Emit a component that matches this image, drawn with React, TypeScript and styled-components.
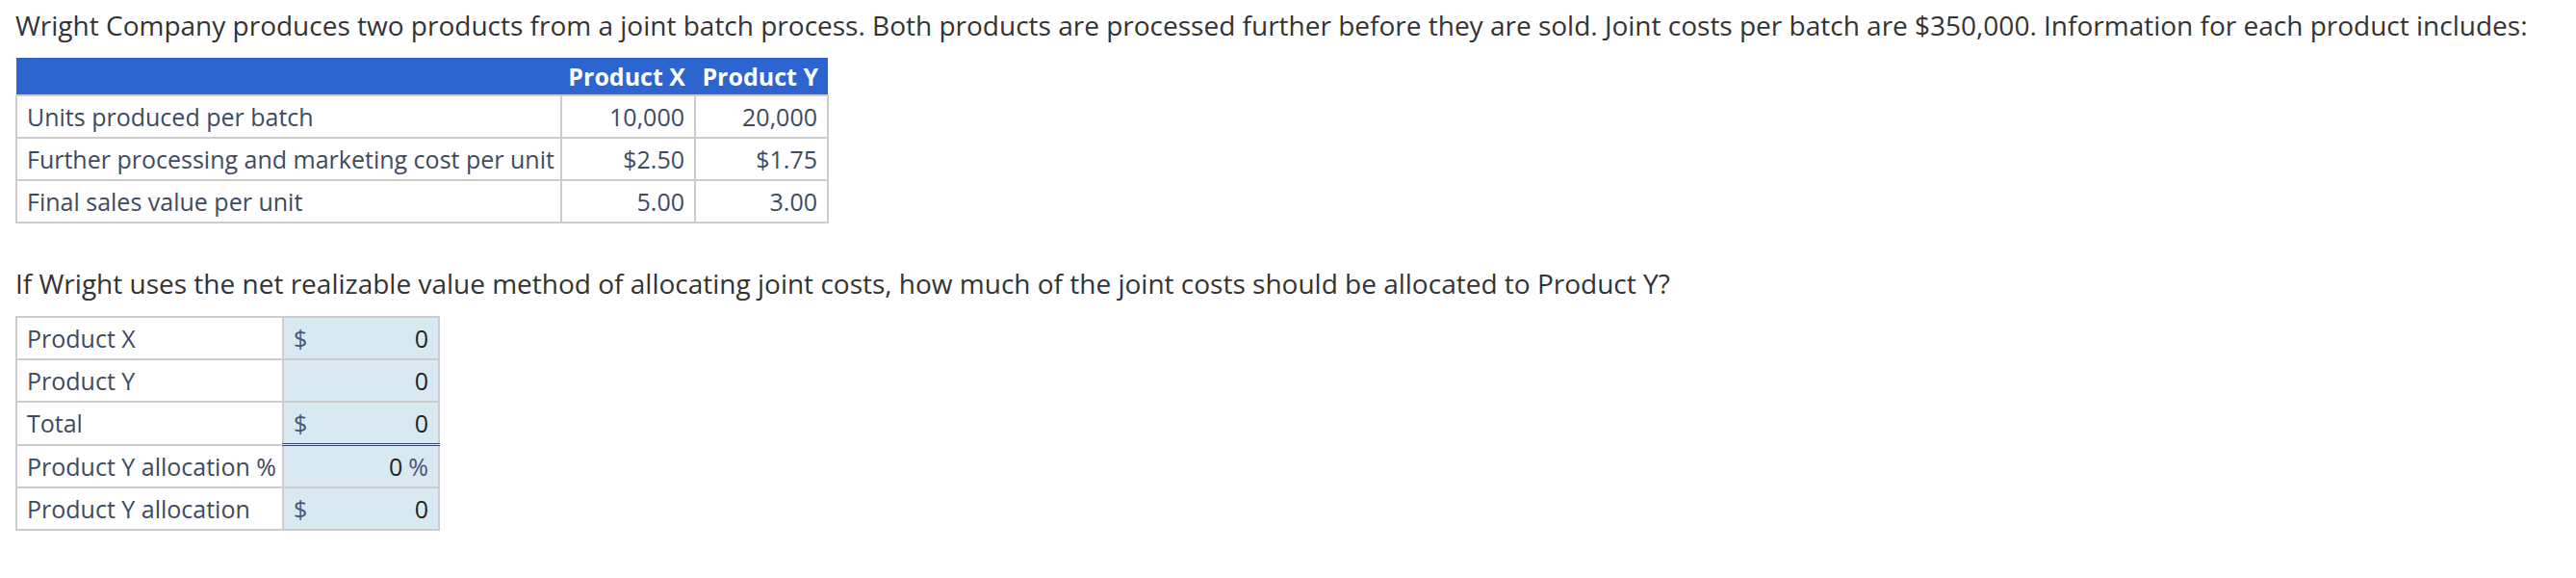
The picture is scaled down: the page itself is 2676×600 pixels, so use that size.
import React from 'react';
import styled, { createGlobalStyle } from 'styled-components';

const GlobalStyle = createGlobalStyle`
    body {
        margin: 0;
        background: #ffffff;
        font-family: "Open Sans", "Noto Sans", sans-serif;
    }
`;

type InfoRow = { label: string; x: string; y: string };

const infoRows: InfoRow[] = [
    { label: 'Units produced per batch', x: '10,000', y: '20,000' },
    { label: 'Further processing and marketing cost per unit', x: '$2.50', y: '$1.75' },
    { label: 'Final sales value per unit', x: '5.00', y: '3.00' },
];

type AnswerRow = {
    label: string;
    value: string;
    dollar?: boolean;
    suffix?: string;
    rule?: 'single' | 'total';
};

const answerRows: AnswerRow[] = [
    { label: 'Product X', value: '0', dollar: true },
    { label: 'Product Y', value: '0' },
    { label: 'Total', value: '0', dollar: true, rule: 'total' },
    { label: 'Product Y allocation %', value: '0', suffix: '%' },
    { label: 'Product Y allocation', value: '0', dollar: true },
];

const App: React.FC = () => {
    return (
        <>
            <GlobalStyle />
            <Page>
                <Prompt>
                    Wright Company produces two products from a joint batch process. Both products are processed
                    further before they are sold. Joint costs per batch are $350,000. Information for each product
                    includes:
                </Prompt>

                <InfoTable>
                    <colgroup>
                        <col style={{ width: 566 }} />
                        <col style={{ width: 139 }} />
                        <col style={{ width: 138 }} />
                    </colgroup>
                    <thead>
                        <tr>
                            <HeadCell />
                            <HeadCell>Product X</HeadCell>
                            <HeadCell>Product Y</HeadCell>
                        </tr>
                    </thead>
                    <tbody>
                        {infoRows.map((row) => (
                            <tr key={row.label}>
                                <LabelCell>{row.label}</LabelCell>
                                <NumberCell>{row.x}</NumberCell>
                                <NumberCell>{row.y}</NumberCell>
                            </tr>
                        ))}
                    </tbody>
                </InfoTable>

                <Question>
                    If Wright uses the net realizable value method of allocating joint costs, how much of the joint
                    costs should be allocated to Product Y?
                </Question>

                <AnswerTable>
                    <colgroup>
                        <col style={{ width: 277 }} />
                        <col style={{ width: 162 }} />
                    </colgroup>
                    <tbody>
                        {answerRows.map((row) => (
                            <tr key={row.label}>
                                <LabelCell>{row.label}</LabelCell>
                                <InputCell $total={row.rule === 'total'}>
                                    <InputBox>
                                        <Currency>{row.dollar ? '$' : ''}</Currency>
                                        <Amount>
                                            {row.value}
                                            {row.suffix && <Suffix>{row.suffix}</Suffix>}
                                        </Amount>
                                    </InputBox>
                                </InputCell>
                            </tr>
                        ))}
                    </tbody>
                </AnswerTable>
            </Page>
        </>
    );
};

const Page = styled.div`
    padding: 6px 16px 20px;
`;

const Prompt = styled.p`
    margin: 0 0 14px;
    font-size: 28px;
    line-height: 40px;
    color: #333333;
    white-space: nowrap;
`;

const Question = styled.p`
    margin: 42px 0 14px;
    font-size: 28px;
    line-height: 40px;
    color: #333333;
    white-space: nowrap;
`;

const InfoTable = styled.table`
    border-collapse: collapse;
    table-layout: fixed;
    width: 843px;
    font-size: 25px;
    color: #3e4a60;
`;

const HeadCell = styled.th`
    height: 38px;
    padding: 0 10px 0 0;
    background: #2d65d0;
    color: #ffffff;
    font-weight: 700;
    text-align: right;
    line-height: 38px;
    white-space: nowrap;
`;

const LabelCell = styled.td`
    height: 42px;
    padding: 0 10px;
    border: 2px solid #cccccc;
    text-align: left;
    line-height: 32px;
    white-space: nowrap;
    color: #3e4a60;
`;

const NumberCell = styled.td`
    height: 42px;
    padding: 0 10px;
    border: 2px solid #cccccc;
    text-align: right;
    line-height: 32px;
`;

const AnswerTable = styled.table`
    border-collapse: collapse;
    table-layout: fixed;
    width: 439px;
    font-size: 25px;
    color: #3e4a60;
`;

const InputCell = styled.td<{ $total?: boolean }>`
    height: 42px;
    padding: 0;
    background: #d8e9f1;
    border: 2px solid #cccccc;
    ${({ $total }) =>
        $total &&
        `
        border-top: 2px solid #000000;
        border-bottom: 3px double #3b4867;
    `}
`;

const InputBox = styled.div`
    display: flex;
    align-items: center;
    justify-content: space-between;
    padding: 0 10px;
    line-height: 32px;
`;

const Currency = styled.span`
    color: #4a5670;
`;

const Amount = styled.span`
    color: #222222;
`;

const Suffix = styled.span`
    margin-left: 6px;
    color: #4a5670;
`;

export default App;
